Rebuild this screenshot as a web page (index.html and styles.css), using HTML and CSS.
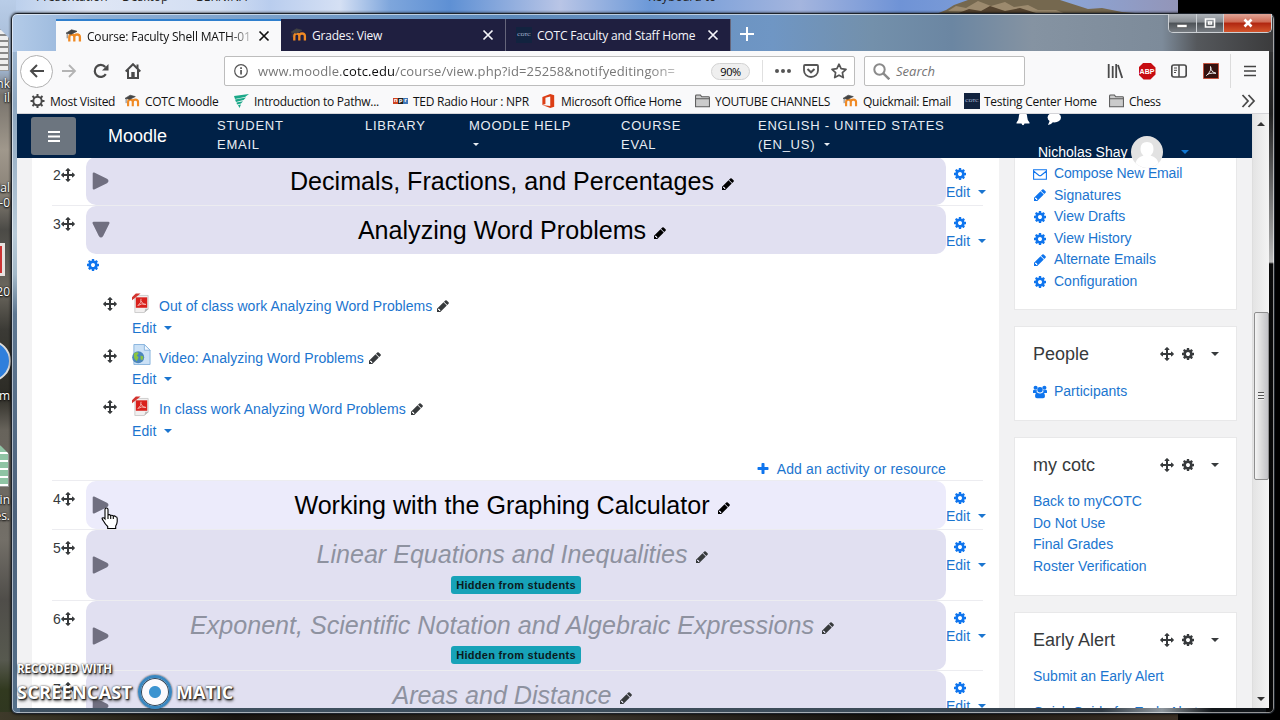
FILE: index.html
```
<!DOCTYPE html>
<html lang="en">
<head>
	<meta charset="UTF-8">
	<title>Course: Faculty Shell MATH-01</title>
	<link rel="stylesheet" href="styles.css">
</head>
<body>
<!-- icons -->
<svg class="sprite">
	<symbol id="cog" viewBox="0 0 1792 1792"><path d="M1152 896q0-106-75-181t-181-75-181 75-75 181 75 181 181 75 181-75 75-181zm512-109v222q0 12-8 23t-20 13l-185 28q-19 54-39 91 35 50 107 138 10 12 10 25t-9 23q-27 37-99 108t-94 71q-12 0-26-9l-138-108q-44 23-91 38-16 136-29 186-7 28-36 28h-222q-14 0-24.5-8.5t-11.5-21.5l-28-184q-49-16-90-37l-141 107q-10 9-25 9-14 0-25-11-126-114-165-168-7-10-7-23 0-12 8-23 15-21 51-66.5t54-70.5q-27-50-41-99l-183-27q-13-2-21-12.5t-8-23.5v-222q0-12 8-23t19-13l186-28q14-46 39-92-40-57-107-138-10-12-10-24 0-10 9-23 26-36 98.5-107.5t94.5-71.5q13 0 26 10l138 107q44-23 91-38 16-136 29-186 7-28 36-28h222q14 0 24.5 8.5t11.5 21.5l28 184q49 16 90 37l142-107q9-9 24-9 13 0 25 10 129 119 165 170 7 8 7 22 0 12-8 23-15 21-51 66.5t-54 70.5q26 50 41 98l183 28q13 2 21 12.5t8 23.5z"/></symbol>
	<symbol id="pencil" viewBox="0 0 1792 1792"><path d="M491 1536l91-91-235-235-91 91v107h128v128h107zM960 416l416 416-832 832h-416v-416zm683 96q0 53-37 90l-166 166-416-416 166-165q36-38 90-38 53 0 91 38l235 234q37 39 37 91z"/></symbol>
	<symbol id="arrows" viewBox="0 0 1792 1792"><path d="M1792 896q0 26-19 45l-256 256q-19 19-45 19t-45-19-19-45v-128h-384v384h128q26 0 45 19t19 45-19 45l-256 256q-19 19-45 19t-45-19l-256-256q-19-19-19-45t19-45 45-19h128v-384h-384v128q0 26-19 45t-45 19-45-19l-256-256q-19-19-19-45t19-45l256-256q19-19 45-19t45 19 19 45v128h384v-384h-128q-26 0-45-19t-19-45 19-45l256-256q19-19 45-19t45 19l256 256q19 19 19 45t-19 45-45 19h-128v384h384v-128q0-26 19-45t45-19 45 19l256 256q19 19 19 45z"/></symbol>
	<symbol id="plus" viewBox="0 0 1792 1792"><path d="M1600 736v192q0 40-28 68t-68 28h-416v416q0 40-28 68t-68 28h-192q-40 0-68-28t-28-68v-416h-416q-40 0-68-28t-28-68v-192q0-40 28-68t68-28h416v-416q0-40 28-68t68-28h192q40 0 68 28t28 68v416h416q40 0 68 28t28 68z"/></symbol>
	<symbol id="envelope" viewBox="0 0 14 14"><path d="M.6 2.7h12.8v9.6H.6zM.8 4.2l4.9 4q1.3 1 2.6 0l4.9-4" fill="none" stroke="currentColor" stroke-width="1.1"/></symbol>
	<symbol id="users" viewBox="0 0 15 14"><circle cx="2.800" cy="2.400" r="2.200"/><circle cx="12.200" cy="2.400" r="2.200"/><path d="M0 8.200V6q.2-1.500 1.500-1.400 1.500.8 2.900.2Q3.400 6.500 4.300 8.200zM15 8.200V6q-.2-1.500-1.500-1.400-1.500.8-2.900.2 1 1.700.1 3.400z"/><circle cx="7.500" cy="4.600" r="2.900"/><path d="M4.500 7.600q-2.300.2-2.300 4 0 2.200 2 2.200h6.600q2 0 2-2.200 0-3.800-2.300-4-3 2-6 0z"/></symbol>
	<symbol id="moodle" viewBox="0 0 16 14"><path d="M3.300 12.500V8q0-2.300 2.500-2.300T8.300 8v4.500M8.300 12.500V8q0-2.500 2.800-2.500T13.900 8v4.500" fill="none" stroke="#f08a24" stroke-width="2.300"/><path d="M0 4.200 5.500.8 11 2.300 5.300 5.200zM1.200 4.500v4.800" fill="#444" stroke="#444" stroke-width=".7"/></symbol>
	<symbol id="folder" viewBox="0 0 16 14"><path d="M.6 13.200V1.700q0-1 1-1h4.200l1.400 1.800h7.200q1 0 1 1v9.700zM.6 4.600h14.800" fill="#cbcbcb" stroke="#5b5b5b" stroke-width="1.100"/></symbol>
	<symbol id="toggle" viewBox="0 0 18 18"><path d="M.7 1.500Q.7.200 2.200.5L15 6.800q3 2.200 0 4.400L2.200 17.500q-1.500.3-1.500-1z"/></symbol>
	<symbol id="caret" viewBox="0 0 8 4"><path d="M0 0h8L4 4z"/></symbol>
	<symbol id="close" viewBox="0 0 12 12"><path d="M1.500 1.500l9 9m0-9l-9 9" fill="none" stroke="currentColor" stroke-width="1.700"/></symbol>
	<symbol id="pdf" viewBox="0 0 20 21"><path d="M3 2h14v14l-4 4H3z" fill="#f1efef" stroke="#ccc"/><path d="M13 20l1-4h4z" fill="#bbb"/><path d="M0 7V4l4-4h5z" fill="#d2342f"/><path d="M4 4h12v11H4z" fill="#d9201c"/><path d="M9.500 5.500q1 4-3.500 7.500m3.700-5q1.500 4 5 3.500-5-1.500-8 1" fill="none" stroke="#f7b5b0" stroke-width="1"/></symbol>
	<symbol id="web" viewBox="0 0 20 22"><path d="M2 .5h11l6 6v15H2z" fill="#cbe1f6" stroke="#87b3dd"/><path d="M13 .5v6h6z" fill="#f3f9ff" stroke="#87b3dd"/><circle cx="6.500" cy="14" r="6.300" fill="#4c86bd"/><path d="M2 10q4-3 5 0l-2 2 2 2-2 4q-3-2-3-5zm7 2 3 1-1 4-2-1z" fill="#8bc53f"/></symbol>
</svg>

<!-- desktop -->
<div class="desktop">
	<svg class="mountain" viewBox="0 0 262 14"><path d="M0 14 10 10 18 5 32 0h92l28 9 14-1 20 4 26 2z" fill="#75684f"/><path d="M12 11l8-5 10 2 12-7 13 5 14-4 9 5 14-2 10 5 18 0 10 4z" fill="#9c8a6e"/><path d="M20 14l13-5 12 2 9-5 15 5 15-3 16 5z" fill="#54432f"/></svg>
	<span class="label label-top first">Presentation</span>
	<span class="label label-top second">Desktop</span>
	<span class="label label-top third">BERNINA</span>
	<span class="label label-top fourth">Keyboard to</span>
	<div class="paper"></div>
	<div class="acrobat"></div>
	<div class="zoom-app"></div>
	<div class="sheet"></div>
	<span class="label side nk">nk</span>
	<span class="label side il">il</span>
	<span class="label side ial">ial</span>
	<span class="label side zero">-0</span>
	<span class="label side twenty">20</span>
	<span class="label side em">m</span>
	<span class="label side in">in</span>
	<span class="label side es">es.</span>
</div>

<div class="window">
	<!-- title bar with tabs -->
	<div class="titlebar">
		<div class="tab current">
			<svg class="favicon"><use href="#moodle"/></svg>
			<span class="tab-title">Course: Faculty Shell MATH-01</span>
			<svg class="tab-close"><use href="#close"/></svg>
		</div>
		<div class="tab">
			<svg class="favicon"><use href="#moodle"/></svg>
			<span class="tab-title">Grades: View</span>
			<svg class="tab-close"><use href="#close"/></svg>
		</div>
		<div class="tab">
			<span class="cotc">COTC</span>
			<span class="tab-title">COTC Faculty and Staff Home</span>
			<svg class="tab-close"><use href="#close"/></svg>
		</div>
		<svg class="new-tab" viewBox="0 0 14 14"><path d="M7 0v14M0 7h14" stroke="#fff" stroke-width="2"/></svg>
		<div class="window-buttons">
			<span class="minimize"><svg viewBox="0 0 12 12"><path d="M1 7.500h10v3H1z" fill="#fff" stroke="#555" stroke-width=".6"/></svg></span>
			<span class="maximize"><svg viewBox="0 0 12 12"><path d="M1.500 2h9v8h-9zM4.500 5h3v2h-3z" fill="none" stroke="#fff" stroke-width="1.600"/></svg></span>
			<span class="close"><svg viewBox="0 0 12 12"><path d="M2.500 2.500l7 7m0-7l-7 7" fill="none" stroke="#fff" stroke-width="2.600"/></svg></span>
		</div>
	</div>

	<div class="client">
		<div class="toolbar">
			<span class="tool back"><svg viewBox="0 0 16 16"><path d="M15 8H2m6-6L2 8l6 6" fill="none" stroke="#4a4a4a" stroke-width="2"/></svg></span>
			<span class="tool"><svg viewBox="0 0 16 16"><path d="M1 8h13M8 2l6 6-6 6" fill="none" stroke="#b4b4b4" stroke-width="1.800"/></svg></span>
			<span class="tool"><svg viewBox="0 0 16 16"><path d="M12.800 11.200A6 6 0 1 1 12.300 4" fill="none" stroke="#4a4a4a" stroke-width="2.200"/><path d="M15.500 1v6.500H9z" fill="#4a4a4a"/></svg></span>
			<span class="tool"><svg viewBox="0 0 16 16"><path d="M.7 8.500L8 1.200l7.300 7.300M3 7v8h10V7" fill="none" stroke="#4a4a4a" stroke-width="2"/><path d="M6.300 9h3.400v6H6.300zM11.500 1.500h2v4h-2z" fill="#4a4a4a"/></svg></span>
			<div class="urlbar">
				<svg class="info" viewBox="0 0 14 14"><circle cx="7" cy="7" r="6.300" fill="none" stroke="#555" stroke-width="1.200"/><path d="M6.200 6h1.700v4.500H6.200zM6.200 3.200h1.700v1.700H6.200z" fill="#555"/></svg>
				<span class="url">www.moodle.<b>cotc.edu</b>/course/view.php?id=25258&amp;notifyeditingon=</span>
				<span class="zoom-level">90%</span>
				<span class="url-actions">
					<svg viewBox="0 0 16 16"><g fill="#555"><circle cx="2" cy="8" r="2"/><circle cx="8" cy="8" r="2"/><circle cx="14" cy="8" r="2"/></g></svg>
					<svg viewBox="0 0 16 16"><path d="M2 2h12q1 0 1 1v4.500a7 6.500 0 0 1-14 0V3q0-1 1-1z" fill="none" stroke="#555" stroke-width="1.800"/><path d="M4.500 6L8 9.300 11.500 6" fill="none" stroke="#555" stroke-width="2"/></svg>
					<svg viewBox="0 0 16 16"><path d="M8 1.200l2.100 4.500 4.900.6-3.600 3.400.9 4.900L8 12.200l-4.300 2.400.9-4.900L1 6.300l4.900-.6z" fill="none" stroke="#555" stroke-width="1.700" stroke-linejoin="round"/></svg>
				</span>
			</div>
			<div class="search">
				<svg viewBox="0 0 17 17"><circle cx="6.500" cy="6.500" r="5.200" fill="none" stroke="#8a8a8a" stroke-width="2"/><path d="M10.300 10.300l6 6" stroke="#8a8a8a" stroke-width="2.400"/></svg>
				<span>Search</span>
			</div>
			<div class="extensions">
				<span class="tool"><svg viewBox="0 0 16 16"><path d="M1.700 1v14M5.700 3v12M9.200 1v14M11 2l4.200 13" stroke="#4a4a4a" stroke-width="1.800"/></svg></span>
				<span class="tool"><span class="abp">ABP</span></span>
				<span class="tool"><svg viewBox="0 0 16 16"><rect x=".8" y="2" width="14.400" height="12" rx="2" fill="none" stroke="#4a4a4a" stroke-width="1.700"/><path d="M8 2v12" stroke="#4a4a4a" stroke-width="1.500"/><path d="M3 5h3M3 7.300h3M3 9.500h2" stroke="#4a4a4a"/></svg></span>
				<span class="tool"><svg viewBox="0 0 16 16"><path d="M.5.500h15v15H.5z" fill="#35120f" stroke="#c5533f"/><path d="M7.500 3.500q1.500 4-4 9q2-3 9.500-2.200-4-.8-5-4z" fill="none" stroke="#eee" stroke-width="1"/></svg></span>
			</div>
			<span class="tool menu"><svg viewBox="0 0 12 12"><path d="M0 1.500h12M0 6h12M0 10.500h12" stroke="#444" stroke-width="1.700"/></svg></span>
		</div>

		<div class="bookmarks">
			<span><svg viewBox="0 0 14 14"><circle cx="7" cy="7" r="4.200" fill="none" stroke="#4a4a4a" stroke-width="2"/><path d="M7 0v2.500M7 11.500V14M0 7h2.500M11.500 7H14M2 2l2 2M10 10l2 2M12 2l-2 2M4 10l-2 2" stroke="#4a4a4a" stroke-width="2"/></svg>Most Visited</span>
			<span><svg><use href="#moodle"/></svg>COTC Moodle</span>
			<span><svg viewBox="0 0 15 14"><path d="M0 2l15-2-4 3-10 2zM1 5.500L12 3.500 9.500 6 2 8zM2.500 8.500L9 7.200 7 9.500l-4 1zM4 11l3-.6L5.500 14z" fill="#1ba888"/></svg>Introduction to Pathw...</span>
			<span><i class="npr"><em>n</em><em>p</em><em>r</em></i>TED Radio Hour : NPR</span>
			<span><svg viewBox="0 0 14 16"><path d="M0 3.500L9 0l4.500 1.300v13.200L9 16 0 12.700l9 1.100V2.800L3.500 4.200v7.200L0 12.700z" fill="#dc3e15"/></svg>Microsoft Office Home</span>
			<span><svg><use href="#folder"/></svg>YOUTUBE CHANNELS</span>
			<span><svg><use href="#moodle"/></svg>Quickmail: Email</span>
			<span><i class="cotc">COTC</i>Testing Center Home</span>
			<span><svg><use href="#folder"/></svg>Chess</span>
			<span><svg viewBox="0 0 14 14"><path d="M1 1l5.500 6L1 13M7 1l5.500 6L7 13" fill="none" stroke="#4a4a4a" stroke-width="1.800"/></svg></span>
		</div>

		<div class="viewport">
			<div class="page">
				<div class="navbar">
					<span class="hamburger"><svg viewBox="0 0 12 11"><path d="M0 1h12M0 5.500h12M0 10h12" stroke="#fff" stroke-width="2"/></svg></span>
					<span class="brand">Moodle</span>
					<ul class="nav-links">
						<li>STUDENT<br>EMAIL</li>
						<li>LIBRARY</li>
						<li>MOODLE HELP<br><svg class="caret"><use href="#caret"/></svg></li>
						<li>COURSE<br>EVAL</li>
						<li>ENGLISH - UNITED STATES<br>(EN_US) <svg class="caret"><use href="#caret"/></svg></li>
					</ul>
					<div class="user">
						<div class="notices">
							<svg viewBox="0 0 14 14"><path d="M7 0q4 0 4.200 5 .2 4 2.300 5.600v.9H.5v-.9Q2.600 9 2.800 5 3 0 7 0zM5.500 11.500h3Q8 13.300 7 13.300t-1.500-1.800z"/></svg>
							<svg viewBox="0 0 14 14"><ellipse cx="7.300" cy="5.500" rx="6.700" ry="5"/><path d="M3 8L1 13q3 0 5-3z"/></svg>
						</div>
						<div class="account">Nicholas Shay
							<svg class="avatar" viewBox="0 0 32 32"><circle cx="16" cy="16" r="16" fill="#e2e2e2"/><path d="M16 6q6.500 0 6.500 7 0 4-3 6.500 7 2 8 7.500A16 16 0 0 1 4.500 27q1-5.500 8-7.500-3-2.500-3-6.500 0-7 6.500-7z" fill="#fff"/></svg>
							<svg class="caret"><use href="#caret"/></svg>
						</div>
					</div>
				</div>

				<div class="content">
					<div class="course">
						<div class="section">
							<div class="handle">2<svg class="icon"><use href="#arrows"/></svg></div>
							<div class="section-body">
								<div class="section-head"><svg class="toggle"><use href="#toggle"/></svg><h3>Decimals, Fractions, and Percentages<svg class="icon"><use href="#pencil"/></svg></h3></div>
							</div>
							<div class="edit"><svg class="icon"><use href="#cog"/></svg><span>Edit<svg class="caret"><use href="#caret"/></svg></span></div>
						</div>
						<div class="section open">
							<div class="handle">3<svg class="icon"><use href="#arrows"/></svg></div>
							<div class="section-body">
								<div class="section-head"><svg class="toggle"><use href="#toggle"/></svg><h3>Analyzing Word Problems<svg class="icon"><use href="#pencil"/></svg></h3></div>
								<svg class="icon highlight"><use href="#cog"/></svg>
								<ul class="activities">
									<li>
										<svg class="icon move"><use href="#arrows"/></svg>
										<div>
											<a><svg class="mod"><use href="#pdf"/></svg>Out of class work Analyzing Word Problems<svg class="icon"><use href="#pencil"/></svg></a>
											<span>Edit<svg class="caret"><use href="#caret"/></svg></span>
										</div>
									</li>
									<li>
										<svg class="icon move"><use href="#arrows"/></svg>
										<div>
											<a><svg class="mod"><use href="#web"/></svg>Video: Analyzing Word Problems<svg class="icon"><use href="#pencil"/></svg></a>
											<span>Edit<svg class="caret"><use href="#caret"/></svg></span>
										</div>
									</li>
									<li>
										<svg class="icon move"><use href="#arrows"/></svg>
										<div>
											<a><svg class="mod"><use href="#pdf"/></svg>In class work Analyzing Word Problems<svg class="icon"><use href="#pencil"/></svg></a>
											<span>Edit<svg class="caret"><use href="#caret"/></svg></span>
										</div>
									</li>
								</ul>
								<div class="add"><svg class="icon"><use href="#plus"/></svg>Add an activity or resource</div>
							</div>
							<div class="edit"><svg class="icon"><use href="#cog"/></svg><span>Edit<svg class="caret"><use href="#caret"/></svg></span></div>
						</div>
						<div class="section hover">
							<div class="handle">4<svg class="icon"><use href="#arrows"/></svg></div>
							<div class="section-body">
								<div class="section-head"><svg class="toggle"><use href="#toggle"/></svg><h3>Working with the Graphing Calculator<svg class="icon"><use href="#pencil"/></svg></h3></div>
							</div>
							<div class="edit"><svg class="icon"><use href="#cog"/></svg><span>Edit<svg class="caret"><use href="#caret"/></svg></span></div>
						</div>
						<div class="section hidden">
							<div class="handle">5<svg class="icon"><use href="#arrows"/></svg></div>
							<div class="section-body">
								<div class="section-head"><svg class="toggle"><use href="#toggle"/></svg><h3>Linear Equations and Inequalities<svg class="icon"><use href="#pencil"/></svg></h3><span class="badge">Hidden from students</span></div>
							</div>
							<div class="edit"><svg class="icon"><use href="#cog"/></svg><span>Edit<svg class="caret"><use href="#caret"/></svg></span></div>
						</div>
						<div class="section hidden">
							<div class="handle">6<svg class="icon"><use href="#arrows"/></svg></div>
							<div class="section-body">
								<div class="section-head"><svg class="toggle"><use href="#toggle"/></svg><h3>Exponent, Scientific Notation and Algebraic Expressions<svg class="icon"><use href="#pencil"/></svg></h3><span class="badge">Hidden from students</span></div>
							</div>
							<div class="edit"><svg class="icon"><use href="#cog"/></svg><span>Edit<svg class="caret"><use href="#caret"/></svg></span></div>
						</div>
						<div class="section hidden">
							<div class="handle">7<svg class="icon"><use href="#arrows"/></svg></div>
							<div class="section-body">
								<div class="section-head"><svg class="toggle"><use href="#toggle"/></svg><h3>Areas and Distance<svg class="icon"><use href="#pencil"/></svg></h3></div>
							</div>
							<div class="edit"><svg class="icon"><use href="#cog"/></svg><span>Edit<svg class="caret"><use href="#caret"/></svg></span></div>
						</div>
					</div>

					<div class="blocks">
						<div class="block quickmail">
							<ul>
								<li class="compose"><svg class="icon"><use href="#envelope"/></svg>Compose New Email</li>
								<li><svg class="icon"><use href="#pencil"/></svg>Signatures</li>
								<li><svg class="icon"><use href="#cog"/></svg>View Drafts</li>
								<li><svg class="icon"><use href="#cog"/></svg>View History</li>
								<li><svg class="icon"><use href="#pencil"/></svg>Alternate Emails</li>
								<li><svg class="icon"><use href="#cog"/></svg>Configuration</li>
							</ul>
						</div>
						<div class="block people">
							<h5>People<span><svg class="icon"><use href="#arrows"/></svg><svg class="icon"><use href="#cog"/></svg><svg class="caret"><use href="#caret"/></svg></span></h5>
							<ul>
								<li><svg class="icon"><use href="#users"/></svg>Participants</li>
							</ul>
						</div>
						<div class="block mycotc">
							<h5>my cotc<span><svg class="icon"><use href="#arrows"/></svg><svg class="icon"><use href="#cog"/></svg><svg class="caret"><use href="#caret"/></svg></span></h5>
							<ul>
								<li>Back to myCOTC</li>
								<li>Do Not Use</li>
								<li>Final Grades</li>
								<li>Roster Verification</li>
							</ul>
						</div>
						<div class="block alert">
							<h5>Early Alert<span><svg class="icon"><use href="#arrows"/></svg><svg class="icon"><use href="#cog"/></svg><svg class="caret"><use href="#caret"/></svg></span></h5>
							<p>Submit an Early Alert</p>
							<p>Quick Guide for Early Alert</p>
						</div>
					</div>
				</div>
			</div>

			<div class="scrollbar">
				<svg class="up" viewBox="0 0 8 4"><path d="M0 4h8L4 0z"/></svg>
				<div class="thumb"><i></i></div>
				<svg class="down" viewBox="0 0 8 4"><use href="#caret"/></svg>
			</div>
		</div>
	</div>
</div>

<!-- mouse pointer -->
<svg class="pointer" viewBox="0 0 17 22"><path d="M5.500 1q1.500 0 1.500 1.500V8q1.500-1 2.700.5 1.400-.8 2.500.5 1.500-.6 2.500.8 1.500 0 1.500 1.700v3q0 2-1.500 4.500V21.500h-8V19.500Q4 17 2.500 14 .6 11.500 1.300 11q1.300-.8 2.700 1V2.500Q4 1 5.500 1zM7 8v4M9.700 8.500V12M12.300 9v3" fill="#fff" stroke="#000" stroke-width="1.100"/></svg>

<!-- recorder watermark -->
<div class="watermark">
	<div class="recorded">RECORDED WITH</div>
	<div class="som"><span class="wm-left">SCREENCAST</span><i></i><span class="wm-right">MATIC</span></div>
</div>
</body>
</html>
```
FILE: styles.css
```
* {
	box-sizing: border-box;
}

body {
	position: relative;
	width: 1280px;
	height: 720px;
	margin: 0;
	overflow: hidden;
	font-family: "Liberation Sans", Arial, sans-serif;
	font-size: 14px;
	background-color: #000;
}

ul, h3, h5, p {
	margin: 0;
	padding: 0;
	font-weight: normal;
	list-style: none;
}

svg {
	display: block;
	flex: none;
	fill: currentColor;
}

.sprite {
	position: absolute;
	width: 0;
	height: 0;
}

.icon {
	width: 14px;
	height: 14px;
}

.caret {
	width: 8px;
	height: 4px;
}

/* desktop */
.desktop {
	position: absolute;
	top: 0;
	left: 0;
	width: 1178px;
	height: 720px;
	overflow: hidden;
	background:
		linear-gradient(90deg, #3e3a2a, #191511 20%, #38322a 50%, #15120e 75%, #3b3026) 0 712px / 100% 8px no-repeat,
		linear-gradient(#b9cde8 0, #9fb4cf 70px, #77726b 95px, #a0988c 150px, #8b8479 190px, #4b4a46 230px, #6b675e 290px, #3b3a35 330px, #2c2b25 395px, #67635b 430px, #736f68 540px, #4f4d49 600px, #57594f 660px, #31391f 690px, #2f3620 720px) 0 0 / 16px 100% no-repeat,
		linear-gradient(90deg, #b4cbea, #dfe6f5 90px, #d2def2 220px, #b9cdee 270px, #d5e0f4 340px, #7ea6dc 390px, #5e90d4 450px, #b9c5e6 560px, #6c99d8 650px, #a4b5de 800px, #6f93d6 900px, #8ba6d8 1060px, #9395b8 1178px) 0 0 / 100% 20px no-repeat;
}

.mountain {
	position: absolute;
	top: 0;
	left: 936px;
	width: 262px;
	height: 14px;
}

.label {
	position: absolute;
	font-family: "Open Sans", sans-serif;
	font-size: 12px;
	line-height: 14px;
	color: #fff;
	text-shadow: 0 1px 2px #000, 0 0 2px #000;
}

.label-top {
	top: -10px;
	color: #222;
	text-shadow: none;
}

.first {
	left: 36px;
}

.second {
	left: 122px;
}

.third {
	left: 196px;
}

.fourth {
	left: 648px;
}

.side {
	right: 1168px;
}

.nk { top: 77px; }
.il { top: 91px; }
.ial { top: 181px; }
.zero { top: 196px; }
.twenty { top: 285px; }
.em { top: 389px; }
.in { top: 493px; }
.es { top: 509px; }

.paper,
.sheet,
.acrobat {
	position: absolute;
	left: -8px;
	width: 17px;
	height: 42px;
	border: 1px solid #999;
	clip-path: polygon(0 0, 8px 0, 100% 9px, 100% 100%, 0 100%);
	background: repeating-linear-gradient(#eee 0 4px, #888 4px 6px);
}

.paper {
	top: 29px;
}

.sheet {
	top: 445px;
	background: repeating-linear-gradient(#8fc4a4 0 6px, #fff 6px 8px);
}

.acrobat {
	top: 243px;
	width: 13px;
	height: 33px;
	clip-path: none;
	border: 3px solid #e8e2e0;
	background: #c33;
}

.zoom-app {
	position: absolute;
	top: 340px;
	left: -31px;
	width: 42px;
	height: 42px;
	border: 2px solid #ddd;
	border-radius: 50%;
	background: #2f7fdc;
}

/* window */
.window {
	position: absolute;
	top: 13px;
	left: 11px;
	width: 1264px;
	height: 701px;
	padding: 0 5px;
	border: 1px solid #1d232b;
	border-radius: 6px;
	box-shadow: inset 0 0 0 1px rgba(255, 255, 255, 0.55), 0 0 3px #000;
	background:
		linear-gradient(90deg, #b3cbe8, #a6c1e2 30px, #8fb0d6 80px, #5d8abb 500px, #6f96c4 760px, #7390ab 860px, #6b86a2 940px, #8593a2 1020px, #7d8b9a 1150px, #55585c 1185px, #3a3a3b 1264px) 0 0 / 100% 38px no-repeat,
		linear-gradient(#a9c3e0, #8da6bf 90px, #b9cbd8 220px, #a5bac9 260px, #5e7791 300px, #4d627b 500px, #54708a 701px) 0 0 / 8px 100% no-repeat,
		linear-gradient(#3c3c3d, #222 100px, #999 220px, #bbb 248px, #0a0a0a 250px, #050505) 100% 0 / 8px 100% no-repeat,
		linear-gradient(90deg, #3f5262, #3c4b58 900px, #303a44 1090px, #8d959c 1150px, #12161a 1200px) 0 100% / 100% 8px no-repeat;
}

.titlebar {
	display: flex;
	align-items: flex-start;
	height: 37px;
	padding-left: 39px;
}

.tab {
	display: flex;
	flex: none;
	align-items: center;
	width: 225px;
	height: 32px;
	margin-top: 5px;
	padding: 0 11px 0 10px;
	color: #f5f5fa;
	border-right: 1px solid #65657a;
	background-color: #1f1f40;
}

.tab.current {
	color: #111;
	border-top: 2px solid #2f7fcd;
	border-right: none;
	background-color: #f9f9fa;
}

.favicon {
	width: 16px;
	height: 14px;
}

.tab-title {
	flex: 1;
	margin-left: 5px;
	overflow: hidden;
	font-family: "Open Sans", sans-serif;
	font-size: 12px;
	letter-spacing: -0.2px;
	white-space: nowrap;
}

.current .tab-title {
	-webkit-mask-image: linear-gradient(90deg, #000 142px, rgba(0, 0, 0, 0.25) 163px);
	mask-image: linear-gradient(90deg, #000 142px, rgba(0, 0, 0, 0.25) 163px);
}

.tab-close {
	width: 12px;
	height: 12px;
}

.cotc {
	flex: none;
	width: 16px;
	font-family: "Liberation Serif", serif;
	font-size: 5px;
	font-style: normal;
	line-height: 16px;
	text-align: center;
	color: #c9d4e4;
	background-color: #12233f;
}

.new-tab {
	width: 14px;
	height: 14px;
	margin: 13px 0 0 9px;
}

.window-buttons {
	display: flex;
	width: 104px;
	height: 19px;
	margin-left: auto;
	margin-right: -3px;
	border: 1px solid #ccd0d4;
	border-top: none;
	border-radius: 0 0 5px 5px;
	overflow: hidden;
}

.window-buttons span {
	display: flex;
	align-items: center;
	justify-content: center;
	width: 28px;
	border-right: 1px solid #ccd0d4;
	background: linear-gradient(#aeb3b9, #878c92 45%, #4d5257 50%, #777c82);
}

.window-buttons .close {
	width: 47px;
	border: none;
	background: linear-gradient(#e0a597, #cf6a54 45%, #b02510 50%, #d4562c);
}

.window-buttons svg {
	width: 12px;
	height: 12px;
}

.client {
	display: flex;
	flex-direction: column;
	height: 657px;
	background-color: #f9f9fa;
}

.toolbar {
	display: flex;
	align-items: center;
	height: 40px;
	padding-left: 3px;
}

.tool {
	display: flex;
	align-items: center;
	justify-content: center;
	width: 32px;
	height: 32px;
}

.tool svg {
	width: 16px;
	height: 16px;
}

.back {
	width: 33px;
	height: 33px;
	border: 1px solid #b1b1b1;
	border-radius: 50%;
	background-color: #fff;
}

.urlbar {
	display: flex;
	align-items: center;
	width: 631px;
	height: 30px;
	margin-left: 75px;
	padding-left: 9px;
	border: 1px solid #bdbdbd;
	border-radius: 2px;
	background-color: #fff;
}

.info {
	width: 14px;
	height: 14px;
}

.url {
	width: 453px;
	margin-left: 10px;
	font-family: "Open Sans", sans-serif;
	font-size: 13px;
	letter-spacing: 0.12px;
	white-space: nowrap;
	overflow: hidden;
	color: #777;
	-webkit-mask-image: linear-gradient(90deg, #000 390px, rgba(0, 0, 0, 0.3) 425px);
	mask-image: linear-gradient(90deg, #000 390px, rgba(0, 0, 0, 0.3) 425px);
}

.url b {
	font-weight: normal;
	color: #0c0c0d;
}

.zoom-level {
	width: 39px;
	height: 17px;
	font-family: "Open Sans", sans-serif;
	font-size: 11px;
	line-height: 15px;
	text-align: center;
	letter-spacing: -0.4px;
	border: 1px solid #d2d2d2;
	border-radius: 9px;
	background-color: #efefef;
}

.url-actions {
	display: flex;
	align-items: center;
	gap: 12px;
	height: 22px;
	margin-left: 12px;
	padding-left: 12px;
	border-left: 1px solid #e0e0e0;
}

.url-actions svg {
	width: 16px;
	height: 16px;
}

.search {
	display: flex;
	align-items: center;
	gap: 6px;
	width: 161px;
	height: 30px;
	margin-left: 9px;
	padding-left: 8px;
	font-family: "Open Sans", sans-serif;
	font-size: 13px;
	font-style: italic;
	color: #757575;
	border: 1px solid #bdbdbd;
	border-radius: 2px;
	background-color: #fff;
}

.search svg {
	width: 17px;
	height: 17px;
}

.extensions {
	display: flex;
	align-items: center;
	height: 34px;
	margin-left: 74px;
	padding-right: 3px;
	border-right: 1px solid #dcdcdc;
}

.abp {
	width: 17px;
	height: 17px;
	font-size: 7px;
	font-weight: bold;
	line-height: 17px;
	text-align: center;
	color: #fff;
	background-color: #c70d12;
	clip-path: polygon(30% 0, 70% 0, 100% 30%, 100% 70%, 70% 100%, 30% 100%, 0 70%, 0 30%);
}

.menu {
	margin-left: 3px;
}

.menu svg {
	width: 12px;
	height: 12px;
}

.bookmarks {
	display: grid;
	grid-template-columns: 95px 109px 159px 148px 154px 148px 121px 145px 132px 20px;
	align-items: center;
	height: 23px;
	padding: 0 0 2px 13px;
	font-family: "Open Sans", sans-serif;
	font-size: 12px;
	letter-spacing: -0.27px;
	color: #111;
	border-bottom: 1px solid #d4d4d8;
}

.bookmarks span {
	display: flex;
	align-items: center;
	gap: 5px;
	white-space: nowrap;
}

.bookmarks svg {
	width: 15px;
	height: 14px;
}

.bookmarks .cotc {
	margin-right: -1px;
	letter-spacing: 0;
}

.npr {
	display: flex;
	width: 15px;
	height: 6px;
}

.npr em {
	flex: 1;
	font-size: 6px;
	font-style: normal;
	font-weight: bold;
	line-height: 5px;
	text-align: center;
	color: #fff;
	background-color: #d0441f;
}

.npr em:nth-child(2) {
	background-color: #222;
}

.npr em:nth-child(3) {
	background-color: #3d76b8;
}

/* page */
.viewport {
	display: flex;
	flex: 1;
	min-height: 0;
}

.page {
	width: 1235px;
	height: 594px;
	overflow: hidden;
	background-color: #f2f2f3;
}

.navbar {
	position: relative;
	z-index: 1;
	display: flex;
	height: 44px;
	padding-left: 14px;
	color: #fff;
	background-color: #002147;
}

.hamburger {
	display: flex;
	align-items: center;
	justify-content: center;
	width: 45px;
	height: 38px;
	margin-top: 3px;
	border-radius: 3px;
	background-color: #6c757f;
}

.hamburger svg {
	width: 12px;
	height: 11px;
}

.brand {
	width: 141px;
	padding-left: 32px;
	font-size: 18px;
	line-height: 44px;
}

.nav-links {
	display: grid;
	grid-template-columns: 148px 104px 152px 137px 200px;
	padding-top: 2px;
	font-size: 13px;
	line-height: 19px;
	letter-spacing: 0.75px;
	color: #e8edf3;
	white-space: nowrap;
}

.nav-links .caret,
.edit .caret,
.activities .caret {
	display: inline-block;
	margin-left: 8px;
	vertical-align: 3px;
}

.nav-links .caret {
	width: 6px;
	height: 3px;
	margin-left: 4px;
}

.user {
	flex: none;
	width: 290px;
}

.notices {
	display: flex;
	gap: 17px;
	margin-top: -2px;
	padding-left: 58px;
}

.notices svg {
	width: 14px;
	height: 14px;
}

.account {
	display: flex;
	align-items: center;
	gap: 3px;
	height: 34px;
	margin-top: 9px;
	padding-left: 80px;
	white-space: nowrap;
}

.avatar {
	width: 32px;
	height: 32px;
}

.account .caret {
	margin-left: 15px;
	color: #1177d1;
}

.content {
	display: flex;
	height: 550px;
	padding-left: 15px;
}

.course {
	flex: none;
	width: 967px;
	height: 551px;
	margin-top: -1px;
	padding: 0 16px 0 20px;
	background-color: #fff;
}

.section {
	display: grid;
	grid-template-columns: 34px 860px 37px;
	border-bottom: 1px solid #ececf0;
}

.handle {
	display: flex;
	align-items: center;
	height: 36px;
	padding-left: 1px;
	color: #373a3c;
}

.section-head {
	position: relative;
	height: 48px;
	padding: 6px 7px 0 0;
	text-align: center;
	border-radius: 10px;
	background-color: #e1e0f1;
}

.open .section-body {
	height: 274px;
}

.hover .section-head {
	background-color: #ecebfb;
}

.hidden .section-head {
	height: 70px;
}

.hidden + .hidden .section-head {
	height: 69px;
}

.toggle {
	position: absolute;
	top: 50%;
	left: 6px;
	width: 18px;
	height: 18px;
	margin-top: -9px;
	color: #706f80;
}

.open .toggle {
	transform: rotate(90deg);
}

h3 {
	display: flex;
	align-items: center;
	justify-content: center;
	gap: 7px;
	font-size: 25.1px;
	line-height: 36px;
	color: #000;
}

h3 .icon {
	margin-top: 6px;
}

.hidden h3 {
	font-style: italic;
	color: #8e92a0;
}

.hidden h3 .icon {
	color: #373a3c;
}

.badge {
	display: inline-block;
	width: 130px;
	height: 18px;
	margin: 4px 0 0 7px;
	font-size: 11px;
	font-weight: bold;
	line-height: 18px;
	letter-spacing: 0.3px;
	color: #0b1a20;
	border-radius: 3px;
	background-color: #17a2b8;
}

.hidden + .hidden .badge {
	margin-top: 3px;
}

.edit {
	padding-top: 10px;
	line-height: 20px;
	color: #1b75cf;
	white-space: nowrap;
}

.edit .icon {
	margin: 0 0 1px 7px;
}

.edit .icon,
.highlight,
.add .icon,
.block li .icon {
	color: #0f75ee;
}

.highlight {
	margin: 4px 0 0;
}

.activities {
	padding: 22px 0 0 17px;
	letter-spacing: 0.05px;
	color: #1b75cf;
}

.activities li {
	display: flex;
	gap: 15px;
	height: 51.500px;
}

.activities .move {
	margin-top: 3px;
	color: #373a3c;
}

.activities a {
	display: flex;
	align-items: center;
	height: 24px;
	margin-bottom: 1.500px;
}

.activities a .icon {
	margin-left: 4px;
	color: #373a3c;
}

.mod {
	width: 19px;
	height: 21px;
	margin: -6px 8px 0 0;
}

.add {
	display: flex;
	align-items: center;
	justify-content: flex-end;
	gap: 7px;
	margin-top: 12px;
	letter-spacing: 0.13px;
	color: #1b75cf;
}

.blocks {
	display: flex;
	flex: none;
	flex-direction: column;
	gap: 16px;
	width: 223px;
	margin-left: 15px;
}

.block {
	flex: none;
	padding: 0 18px;
	border: 1px solid #e8e8e9;
	background-color: #fff;
}

.block ul,
.block p {
	line-height: 21.600px;
	color: #1b75cf;
}

.block li {
	display: flex;
	align-items: center;
	gap: 7px;
	height: 21.600px;
}

.quickmail {
	height: 152px;
	padding-top: 5px;
	border-top: none;
}

.compose {
	letter-spacing: -0.150px;
}

.people {
	height: 95px;
}

.mycotc {
	height: 159px;
}

.mycotc ul,
.alert h5 + p {
	margin-top: -1px;
}

.alert {
	height: 150px;
}

.alert p {
	margin-bottom: 14px;
}

.block h5 {
	display: flex;
	align-items: center;
	justify-content: space-between;
	height: 54px;
	font-size: 18px;
	color: #373a3c;
}

.block h5 span {
	display: flex;
	align-items: center;
	gap: 7px;
	margin-right: -1px;
}

.block h5 .caret {
	margin-left: 9px;
}

.scrollbar {
	display: flex;
	flex-direction: column;
	align-items: center;
	width: 17px;
	padding: 8px 0 7px;
	color: #333;
	border-left: 1px solid #dedede;
	background: linear-gradient(90deg, #e4e4e4, #f4f4f4);
}

.scrollbar svg {
	width: 8px;
	height: 4px;
}

.thumb {
	display: flex;
	align-items: center;
	justify-content: center;
	width: 15px;
	height: 168px;
	margin: 186px 0 auto;
	border: 1px solid #8e8e8e;
	border-radius: 2px;
	background: linear-gradient(90deg, #f4f4f4, #dadada 50%, #c2c2c6);
}

.thumb i {
	width: 6px;
	height: 8px;
	background: repeating-linear-gradient(#555 0 1px, #eee 1px 3px);
}

.pointer {
	position: absolute;
	top: 507px;
	left: 101px;
	width: 17px;
	height: 22px;
}

/* watermark */
.watermark {
	position: absolute;
	top: 661px;
	left: 17px;
	font-family: "Open Sans", sans-serif;
	font-weight: bold;
	color: #fff;
	text-shadow: 1px 1px 1px #222, 0 0 2px #333, 1px 2px 3px #444;
}

.recorded {
	font-size: 11.500px;
	line-height: 15px;
}

.som {
	display: flex;
	align-items: center;
	height: 31px;
	font-size: 18px;
}

.wm-left {
	width: 121px;
	letter-spacing: 0.3px;
}

.som i {
	width: 34px;
	height: 34px;
	margin-right: 4px;
	border: 3px solid #3a87bf;
	border-radius: 50%;
	box-shadow: inset 0 0 0 1px #345, 0 0 2px #222;
	background: radial-gradient(#3b93d0 0 5.500px, rgba(255, 255, 255, 0.85) 6.500px);
}
```
